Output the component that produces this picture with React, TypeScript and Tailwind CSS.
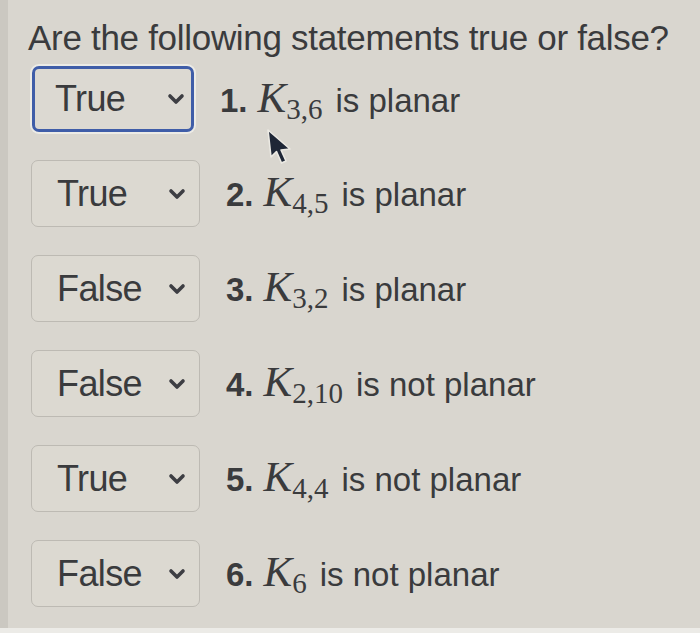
import React from 'react';

const items = [
  { value: 'True', num: '1.', sub: '3,6', rest: 'is planar', focused: true },
  { value: 'True', num: '2.', sub: '4,5', rest: 'is planar' },
  { value: 'False', num: '3.', sub: '3,2', rest: 'is planar' },
  { value: 'False', num: '4.', sub: '2,10', rest: 'is not planar' },
  { value: 'True', num: '5.', sub: '4,4', rest: 'is not planar' },
  { value: 'False', num: '6.', sub: '6', rest: 'is not planar' },
];

const serif = { fontFamily: '"Liberation Serif", "Times New Roman", serif' };

function Chevron() {
  return (
    <svg width="18" height="12" viewBox="0 0 18 12" className="shrink-0">
      <path d="M3 3 L9 9 L15 3" fill="none" stroke="#3d3e43" strokeWidth="3.6" strokeLinecap="round" strokeLinejoin="round" />
    </svg>
  );
}

function Cursor() {
  return (
    <svg width="40" height="44" viewBox="0 0 40 44" className="absolute left-[260px] top-[124px]">
      <path
        d="M8 6 L11 33 L16.5 27.5 L21.5 39 L26 37 L21 26 L30 25 Z"
        fill="#1e2636"
        stroke="#ebe9e3"
        strokeWidth="1.6"
        strokeLinejoin="round"
      />
    </svg>
  );
}

export default function App() {
  return (
    <div
      className="relative w-[700px] h-[633px] overflow-hidden bg-[#d9d6cf] text-[#3a3b3d]"
      style={{ fontFamily: '"Liberation Sans", Arial, sans-serif' }}
    >
      <div className="absolute left-0 top-0 h-full w-[8px] bg-[#cbc8c1]" />
      <div className="pl-[28px] pt-[18px]">
        <h1 className="text-[35px] leading-[40px] tracking-[-0.3px] whitespace-nowrap">Are the following statements true or false?</h1>
        <div className="mt-[8px] flex flex-col gap-[28px]">
          {items.map((it) => (
            <div key={it.num} className="flex items-center">
              <div
                className={
                  it.focused
                    ? 'ml-[4px] w-[162px] h-[66px] rounded-[7px] border-[3px] border-[#3f5da8] bg-[#dcd9d2] shadow-[0_0_0_2px_#ecebe6] flex items-center justify-between pl-[20px] pr-[6px]'
                    : 'ml-[3px] w-[169px] h-[67px] rounded-[7px] border border-[#bdbab3] bg-[#dcd9d1] flex items-center justify-between pl-[25px] pr-[13px]'
                }
              >
                <span className="text-[36px] leading-none tracking-[-0.6px]">{it.value}</span>
                <Chevron />
              </div>
              <div className="relative -top-[2px] ml-[26px] flex items-baseline text-[33px] leading-none whitespace-nowrap">
                <span className="font-bold">{it.num}</span>
                <span className="ml-[10px] italic text-[43px]" style={serif}>K</span>
                <span className="relative top-[7px] text-[29px]" style={serif}>{it.sub}</span>
                <span className="ml-[13px]">{it.rest}</span>
              </div>
            </div>
          ))}
        </div>
      </div>
      <Cursor />
      <div className="absolute left-0 bottom-0 w-full h-[5px] bg-[#ecebe7]" />
    </div>
  );
}
